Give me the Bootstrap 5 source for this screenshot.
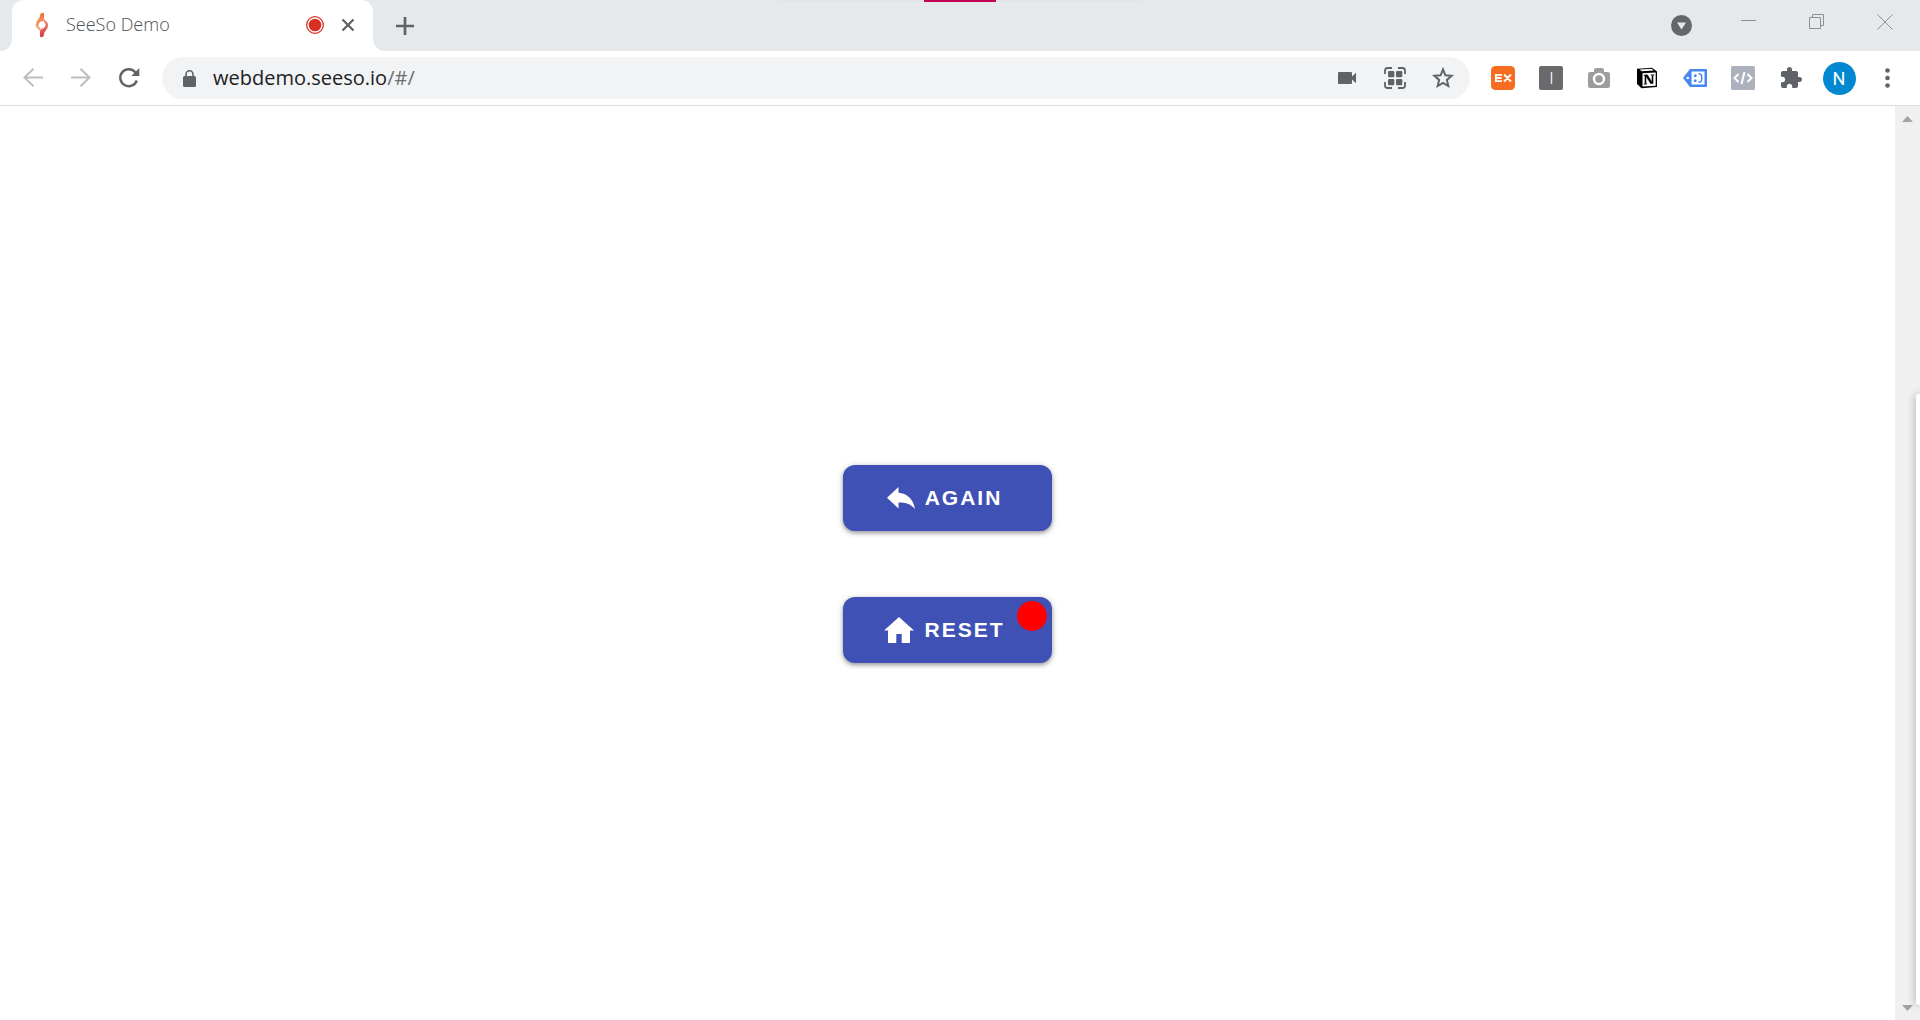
<!DOCTYPE html>
<html lang="en">
<head>
<meta charset="utf-8">
<meta name="viewport" content="width=device-width, initial-scale=1">
<title>SeeSo Demo</title>
<link href="https://cdn.jsdelivr.net/npm/bootstrap@5.3.0/dist/css/bootstrap.min.css" rel="stylesheet">
<style>
  :root { --strip: #e5e9ec; --ink: #5f6368; }
  body { font-family: "Open Sans", "Noto Sans", sans-serif; }
  button, input { font-family: inherit; }
  svg { display: block; flex: none; }
  .plain { background: none; border: 0; padding: 0; color: var(--ink); }

  .tab-strip { height: 51px; }
  .strip-start { width: 12px; background: var(--strip); border-bottom-right-radius: 12px; }
  .strip-rest { background: var(--strip); border-bottom-left-radius: 12px; padding-right: 1px; }
  .tab-back { width: 361px; background: linear-gradient(var(--strip) 20px, #fff 20px); }
  .tab-face { height: 50px; background: #fff; border-radius: 12px 12px 0 0; padding: 0 16px 0 20px; }
  .tab-title { font-size: 18px; font-weight: 300; line-height: 24px; padding-bottom: 2px; color: #4b4f54; margin-left: 14px; }
  .tab-close { width: 18px; margin-left: 15px; }
  .new-tab { width: 64px; }
  .win-btn { width: 68px; height: 43px; color: #8d9092; }
  .share-line { top: 0; left: 0; right: 0; height: 2px; }
  .share-line span { width: 360px; height: 2px; background: #e4e4e6; }
  .share-line i { width: 72px; height: 2px; background: #c60055; }

  .tool-row { height: 55px; padding: 0 9px; border-bottom: 1px solid #d9dbdd; }
  .tool { width: 48px; height: 42px; }
  .tool.off { color: #bcbec0; }
  .omnibox { height: 42px; margin: 0 9px; padding: 0 3px 0 21px; border-radius: 21px; background: #f1f3f4; }
  .address { margin-left: 17px; height: 42px; width: 100%; font-size: 20px; color: #202124; text-decoration: none; line-height: 42px; }
  .address span { color: #6b6f73; }
  .profile { width: 33px; height: 33px; border-radius: 50%; background: #0288d1; color: #fff; font-family: Roboto, sans-serif; font-size: 18px; line-height: 33px; }

  .stage { gap: 66px; padding-top: 2px; }
  .action { width: 209px; height: 66px; gap: 10px; border-radius: 12px; background: #3f51b5; color: #fff;
    font-family: "Liberation Sans", Arial, sans-serif; font-size: 21px; font-weight: 700; letter-spacing: 2px;
    padding: 0 6px 0 0; box-shadow: 0 2px 4px rgba(0,0,0,.35), 0 1px 8px rgba(0,0,0,.12); }
  .action:hover { background: #3f51b5; color: #fff; }
  .gaze { width: 30px; height: 30px; top: 4px; right: 5px; border-radius: 50%; background: #f00; }
  .scroll-rail { width: 25px; background: #f0f0f0; padding: 10px 0 9px; color: #a3a3a3; }
  .side-sheet { width: 4px; top: 394px; bottom: 15px; right: 0; background: #fff; border-radius: 3px 0 0 3px; box-shadow: 0 0 8px rgba(0,0,0,.4); clip-path: inset(-8px 0 -8px -10px); }
</style>
</head>
<body class="vh-100 overflow-hidden d-flex flex-column bg-white position-relative">
<header>
  <div class="tab-strip d-flex">
    <div class="strip-start"></div>
    <div class="tab-back">
      <div class="tab-face d-flex align-items-center">
        <svg width="20" height="26" viewBox="0 0 20 26" aria-hidden="true">
          <defs>
            <linearGradient id="flameTop" x1="0" y1="0" x2="0" y2="1"><stop offset="0" stop-color="#f0702c"/><stop offset="1" stop-color="#f7b184"/></linearGradient>
            <linearGradient id="flameLow" x1="0" y1="0" x2="0" y2="1"><stop offset="0" stop-color="#ee9a80"/><stop offset="1" stop-color="#de3348"/></linearGradient>
          </defs>
          <path fill="url(#flameTop)" d="M8.500 1.800Q10 0 12 1.500V7L10.500 9.300A3.700 3.700 0 0 0 7.500 15.500L9 17.500L8.500 19.500L4.500 15.500Q3 13 4.500 10L7.500 5.500Z"/>
          <path fill="url(#flameLow)" d="M11.500 24.200Q10 26 8 24.500V19L9.500 16.700A3.700 3.700 0 0 0 12.500 10.500L11 8.500L11.500 6.500L15.500 10.500Q17 13 15.500 16L12.500 20.500Z"/>
        </svg>
        <span class="tab-title flex-grow-1">SeeSo Demo</span>
        <svg width="18" height="18" viewBox="0 0 18 18" role="img" aria-label="Recording"><circle cx="9" cy="9" r="8.300" fill="#fff" stroke="#d93025" stroke-width="1.300"/><circle cx="9" cy="9" r="6.300" fill="#d93025"/></svg>
        <button class="plain tab-close d-flex justify-content-center" aria-label="Close tab"><svg width="14" height="14" viewBox="0 0 14 14" stroke="currentColor" stroke-width="2.300"><path d="M1.500 1.500L12.500 12.500M12.500 1.500L1.500 12.500"/></svg></button>
      </div>
    </div>
    <div class="strip-rest flex-grow-1 d-flex align-items-center">
      <button class="plain new-tab d-flex justify-content-center me-auto" aria-label="New tab"><svg width="18" height="18" viewBox="0 0 18 18" stroke="currentColor" stroke-width="2.700"><path d="M9 0V18M0 9H18"/></svg></button>
      <button class="plain win-btn d-flex justify-content-center align-items-center" aria-label="Search tabs"><svg width="21" height="21" viewBox="0 0 21 21"><circle cx="10.500" cy="10.500" r="10.500" fill="#63676b"/><path d="M6 7.500H15L10.500 14.500Z" fill="#e5e9ec"/></svg></button>
      <div class="d-flex align-self-start">
        <button class="plain win-btn d-flex justify-content-center align-items-center" aria-label="Minimize"><svg width="16" height="16" viewBox="0 0 16 16"><path d="M0 6.500H15" stroke="currentColor"/></svg></button>
        <button class="plain win-btn d-flex justify-content-center align-items-center" aria-label="Restore"><svg width="16" height="16" viewBox="0 0 16 16" fill="none" stroke="currentColor"><path d="M.5 3.500H11.500V14.500H.5ZM3.500 3.500V.5H14.500V11.500H11.500"/></svg></button>
        <button class="plain win-btn d-flex justify-content-center align-items-center" aria-label="Close"><svg width="16" height="16" viewBox="0 0 16 16" stroke="currentColor"><path d="M.5 .5L15.500 15.500M15.500 .5L.5 15.500"/></svg></button>
      </div>
    </div>
  </div>
  <div class="share-line position-absolute d-flex justify-content-center"><span class="d-flex justify-content-center"><i></i></span></div>

  <div class="tool-row d-flex align-items-center">
    <button class="plain tool off d-flex justify-content-center align-items-center" aria-label="Back"><svg width="20" height="20" viewBox="0 0 20 20" fill="none" stroke="currentColor" stroke-width="2"><path d="M20 9.500H1.500M10.500 .7L1.500 9.500L10.500 18.300"/></svg></button>
    <button class="plain tool off d-flex justify-content-center align-items-center" aria-label="Forward"><svg width="20" height="20" viewBox="0 0 20 20" fill="none" stroke="currentColor" stroke-width="2"><path d="M0 9.500H18.500M9.500 .7L18.500 9.500L9.500 18.300"/></svg></button>
    <button class="plain tool d-flex justify-content-center align-items-center" aria-label="Reload"><svg width="22" height="22" viewBox="0 0 22 22"><path d="M18.800 13.500A8.500 8.500 0 1 1 17.500 5.500" fill="none" stroke="currentColor" stroke-width="2.400"/><path d="M21.300 1V9H13.300Z" fill="currentColor"/></svg></button>
    <div class="omnibox flex-grow-1 d-flex align-items-center">
      <svg width="13" height="17" viewBox="0 0 13 17" role="img" aria-label="Secure"><rect y="6" width="13" height="11" rx="1.500" fill="#5f6368"/><path d="M3 7V4.200A3.500 3.500 0 0 1 10 4.200V7" fill="none" stroke="#5f6368" stroke-width="1.600"/></svg>
      <a class="address" href="#/">webdemo.seeso.io<span>/#/</span></a>
      <button class="plain tool flex-shrink-0 d-flex justify-content-center align-items-center" aria-label="Camera in use"><svg width="18" height="12" viewBox="0 0 18 12" fill="currentColor"><path d="M1 0H13Q14 0 14 1V4.500L18 .7V11.300L14 7.500V11Q14 12 13 12H1Q0 12 0 11V1Q0 0 1 0Z"/></svg></button>
      <button class="plain tool flex-shrink-0 d-flex justify-content-center align-items-center" aria-label="QR code"><svg width="22" height="22" viewBox="0 0 22 22"><g fill="currentColor"><rect x="4" y="4" width="6.300" height="6.300" rx="1.200"/><rect x="12" y="4" width="6.300" height="6.300" rx="1.200"/><rect x="4" y="12" width="6.300" height="6.300" rx="1.200"/><rect x="12" y="12" width="6.300" height="6.300" rx="1.200"/></g><path d="M1 7V3.500Q1 1 3.500 1H8M14 1H18.500Q21 1 21 3.500V7M21 15V18.500Q21 21 18.500 21H14M8 21H3.500Q1 21 1 18.500V15" fill="none" stroke="currentColor" stroke-width="1.800"/></svg></button>
      <button class="plain tool flex-shrink-0 d-flex justify-content-center align-items-center" aria-label="Bookmark"><svg width="22" height="22" viewBox="0 0 22 22" fill="none" stroke="currentColor" stroke-width="2"><path d="M11 2.500L13.400 8.300L19.600 8.800L14.900 12.900L16.300 19L11 15.800L5.700 19L7.100 12.900L2.400 8.800L8.600 8.300Z"/></svg></button>
    </div>
    <button class="plain tool d-flex justify-content-center align-items-center" aria-label="EX extension"><svg width="24" height="24" viewBox="0 0 24 24"><rect width="24" height="24" rx="4.500" fill="#f66d20"/><path d="M11 8.900H4.900V15.100H11M5 12H10.500M13 8.500L20 15.500M20 8.500L13 15.500" fill="none" stroke="#fff" stroke-width="1.900"/></svg></button>
    <button class="plain tool d-flex justify-content-center align-items-center" aria-label="I extension"><svg width="24" height="24" viewBox="0 0 24 24"><rect width="24" height="24" rx="2" fill="#6a696b"/><path d="M12.500 6V18" stroke="#e6dffb" stroke-width="1.500"/></svg></button>
    <button class="plain tool d-flex justify-content-center align-items-center" aria-label="Screenshot extension"><svg width="22" height="20" viewBox="0 0 22 20"><path d="M2 4H6V2Q6 0 8 0H14Q16 0 16 2V4H20Q22 4 22 6V18Q22 20 20 20H2Q0 20 0 18V6Q0 4 2 4Z" fill="#9d9d9d"/><circle cx="11" cy="11" r="5" fill="#9d9d9d" stroke="#fff" stroke-width="2.400"/></svg></button>
    <button class="plain tool d-flex justify-content-center align-items-center" aria-label="Notion extension"><svg width="22" height="22" viewBox="0 0 22 22"><path d="M1 1.800L16 .7L21 4.500V20L5.500 21.300L1 17Z" fill="#000"/><path d="M3.500 2.600L15.500 1.800L17.800 3.500L5.800 4.300Z" fill="#fff"/><path d="M6.500 6.300L19.700 5.500V18.800L6.500 19.600Z" fill="#fff"/><path d="M9.500 9V16.700M16.500 8.500V16.500" stroke="#000" stroke-width="1.600"/><path d="M8.800 7.800H11.600L17.300 16.700H14.500Z"/><path d="M7.800 8.300H11M14.800 8H18.300M7.900 17H11" stroke="#000"/></svg></button>
    <button class="plain tool d-flex justify-content-center align-items-center" aria-label="Tag assistant"><svg width="24" height="18" viewBox="0 0 24 18"><path d="M7 0H23Q24 0 24 1V17Q24 18 23 18H7L0 9Z" fill="#4587f4"/><circle cx="4.800" cy="9" r="1.300" fill="#fff"/><rect x="8.500" y="2.500" width="13" height="13" fill="#fff"/><path d="M11 5.500H13.500V8H11ZM11 10.500H13.500V13H11Z" fill="#4587f4"/><path d="M15.500 4.800H16.500Q18.800 5 18.800 9Q18.800 13 16.500 13.200H15.500" fill="none" stroke="#4587f4" stroke-width="1.500"/></svg></button>
    <button class="plain tool d-flex justify-content-center align-items-center" aria-label="Code extension"><svg width="24" height="24" viewBox="0 0 24 24"><rect width="24" height="24" rx="1.500" fill="#abb1bd"/><path d="M7.500 8L3.500 12L7.500 16M16.500 8L20.500 12L16.500 16M13.500 6L10.500 18" fill="none" stroke="#fff" stroke-width="2"/></svg></button>
    <button class="plain tool d-flex justify-content-center align-items-center" aria-label="Extensions"><svg width="24" height="24" viewBox="0 0 24 24" fill="currentColor"><path d="M20.500 11H19V7c0-1.100-.9-2-2-2h-4V3.500C13 2.120 11.880 1 10.500 1S8 2.120 8 3.500V5H4c-1.100 0-1.990.9-1.990 2v3.800H3.500c1.490 0 2.700 1.210 2.700 2.700s-1.210 2.700-2.700 2.700H2V20c0 1.100.9 2 2 2h3.800v-1.500c0-1.490 1.210-2.700 2.700-2.700 1.490 0 2.700 1.210 2.700 2.700V22H17c1.100 0 2-.9 2-2v-4h1.500c1.380 0 2.500-1.120 2.500-2.500S21.880 11 20.500 11z"/></svg></button>
    <button class="plain tool d-flex justify-content-center align-items-center" aria-label="Profile"><span class="profile">N</span></button>
    <button class="plain tool d-flex justify-content-center align-items-center" aria-label="Menu"><svg width="5" height="20" viewBox="0 0 5 20" fill="currentColor"><circle cx="2.500" cy="2.500" r="2.300"/><circle cx="2.500" cy="10" r="2.300"/><circle cx="2.500" cy="17.500" r="2.300"/></svg></button>
  </div>
</header>

<div class="flex-grow-1 d-flex">
  <main class="stage flex-grow-1 d-flex flex-column align-items-center justify-content-center">
    <button class="action btn border-0 d-flex align-items-center justify-content-center">
      <svg width="28" height="22" viewBox="0 0 28 22" fill="#fff"><path d="M11.500 0V5.800C20 6.500 26 11.500 28 22C23.500 16.500 18 15.500 11.500 15.500V21.500L0 10.800Z"/></svg>
      <span>AGAIN</span>
    </button>
    <button class="action btn border-0 d-flex align-items-center justify-content-center position-relative">
      <svg width="30" height="26" viewBox="0 0 30 26" fill="#fff"><path d="M15 0L30 13.500H26V26H17.700V17H12.300V26H4V13.500H0Z"/></svg>
      <span>RESET</span>
      <span class="gaze position-absolute"></span>
    </button>
  </main>
  <div class="scroll-rail d-flex flex-column align-items-center justify-content-between">
    <svg width="11" height="6" viewBox="0 0 11 6" fill="currentColor"><path d="M0 6L5.500 0L11 6Z"/></svg>
    <svg width="11" height="6" viewBox="0 0 11 6" fill="currentColor"><path d="M0 0L5.500 6L11 0Z"/></svg>
  </div>
</div>
<div class="side-sheet position-absolute"></div>
<script src="https://cdn.jsdelivr.net/npm/bootstrap@5.3.0/dist/js/bootstrap.bundle.min.js"></script>
</body>
</html>
